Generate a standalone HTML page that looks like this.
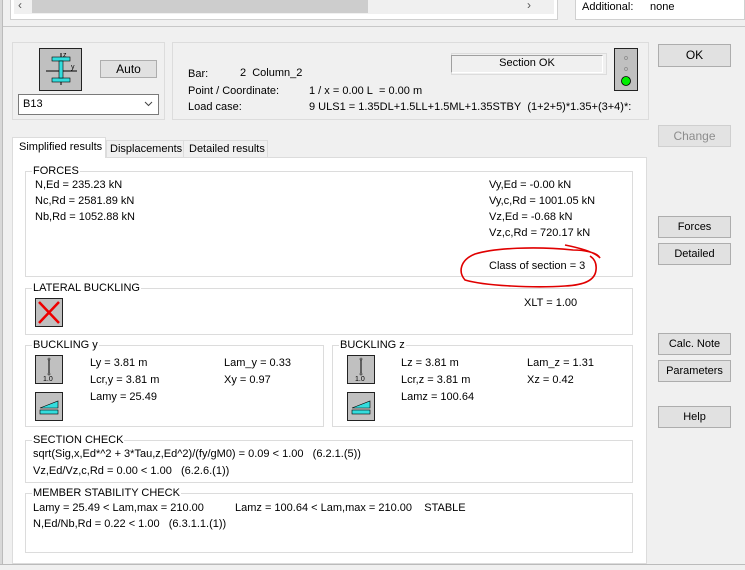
<!DOCTYPE html>
<html><head><meta charset="utf-8"><style>
*{margin:0;padding:0;box-sizing:border-box}
body{width:745px;height:570px;background:#f0f0f0;font-family:"Liberation Sans",sans-serif;font-size:11px;color:#000;position:relative;overflow:hidden}
.a{position:absolute;white-space:nowrap}
.grp{position:absolute;border:1px solid #dcdcdc}
.lbl{position:absolute;top:-7px;left:6px;background:#fff;padding:0 1px;line-height:13px}
.btn{position:absolute;background:#e1e1e1;border:1px solid #adadad;text-align:center;line-height:20px}
.ib{position:absolute;width:28px;height:29px;background:#c0c0c0;border:1px solid #222}
</style></head><body>
<!-- top strip -->
<div class="a" style="left:0;top:0;width:745px;height:27px;background:#f0f0f0;border-bottom:1px solid #c8c8c8"></div>
<div class="a" style="left:10px;top:0;width:548px;height:20px;background:#fff;border:1px solid #d0d0d0;border-top:none"></div>
<div class="a" style="left:14px;top:0;width:540px;height:14px;background:#f0f0f0"></div>
<div class="a" style="left:32px;top:0;width:336px;height:13px;background:#cdcdcd"></div>
<div class="a" style="left:18px;top:-2px;color:#555;font-size:12px">&lsaquo;</div>
<div class="a" style="left:527px;top:-2px;color:#555;font-size:12px">&rsaquo;</div>
<div class="a" style="left:575px;top:0;width:170px;height:20px;background:#fff;border:1px solid #d0d0d0;border-top:none"></div>
<div class="a" style="left:582px;top:1px">Additional:</div>
<div class="a" style="left:650px;top:1px">none</div>
<div class="a" style="left:0;top:0;width:3px;height:570px;background:#d8d8d8;border-right:1px solid #bbb"></div>

<!-- top left group -->
<div class="a" style="left:12px;top:42px;width:153px;height:78px;border:1px solid #dcdcdc"></div>
<div class="a" style="left:39px;top:48px;width:43px;height:43px;background:#c0c0c0;border:1px solid #222">
<svg width="41" height="41" viewBox="0 0 41 41"><line x1="6" y1="22" x2="37" y2="22" stroke="#000"/><line x1="21" y1="4" x2="21" y2="36" stroke="#000"/>
<rect x="12" y="8" width="18" height="4" fill="#3dd" stroke="#000" stroke-width=".6"/><rect x="12" y="29" width="18" height="4" fill="#3dd" stroke="#000" stroke-width=".6"/><rect x="19" y="12" width="4" height="17" fill="#3dd" stroke="#000" stroke-width=".6"/>
<text x="23" y="8" font-size="7" font-family="Liberation Sans">z</text><text x="31" y="20" font-size="7" font-family="Liberation Sans">y</text></svg></div>
<div class="btn" style="left:100px;top:60px;width:57px;height:18px;line-height:16px;font-size:12px">Auto</div>
<div class="a" style="left:18px;top:94px;width:141px;height:21px;background:#fff;border:1px solid #7a7a7a;padding:3px 4px">B13</div>
<svg class="a" style="left:144px;top:101px" width="9" height="6"><polyline points="1,1 4.5,4.5 8,1" fill="none" stroke="#444"/></svg>

<!-- info panel -->
<div class="a" style="left:172px;top:42px;width:477px;height:78px;border:1px solid #dcdcdc"></div>
<div class="a" style="left:188px;top:68px">Bar:</div>
<div class="a" style="left:240px;top:67px">2&nbsp; Column_2</div>
<div class="a" style="left:188px;top:85px">Point / Coordinate:</div>
<div class="a" style="left:309px;top:85px">1 / x = 0.00 L&nbsp; = 0.00 m</div>
<div class="a" style="left:188px;top:101px">Load case:</div>
<div class="a" style="left:309px;top:101px">9 ULS1 = 1.35DL+1.5LL+1.5ML+1.35STBY&nbsp; (1+2+5)*1.35+(3+4)*:</div>
<div class="a" style="left:451px;top:53px;width:156px;height:22px;border:1px solid #dcdcdc"></div>
<div class="a" style="left:451px;top:55px;width:152px;height:18px;border:1px solid #a0a0a0;border-right-color:#fff;border-bottom-color:#fff;text-align:center;line-height:15px">Section OK</div>
<div class="a" style="left:614px;top:48px;width:24px;height:43px;background:#c0c0c0;border:1px solid #222">
<svg width="22" height="41"><circle cx="11" cy="9" r="1.5" fill="none" stroke="#888" stroke-width=".7"/><circle cx="11" cy="20" r="1.5" fill="none" stroke="#888" stroke-width=".7"/><circle cx="11" cy="32" r="4.5" fill="#0e0" stroke="#000" stroke-width=".8"/></svg></div>

<!-- right buttons -->
<div class="btn" style="left:658px;top:44px;width:73px;height:23px;font-size:12px">OK</div>
<div class="btn" style="left:658px;top:125px;width:73px;height:22px;color:#8d8d8d;border-color:#cfcfcf;background:#e3e3e3;font-size:12px">Change</div>
<div class="btn" style="left:658px;top:216px;width:73px;height:22px">Forces</div>
<div class="btn" style="left:658px;top:243px;width:73px;height:22px">Detailed</div>
<div class="btn" style="left:658px;top:333px;width:73px;height:22px">Calc. Note</div>
<div class="btn" style="left:658px;top:360px;width:73px;height:22px">Parameters</div>
<div class="btn" style="left:658px;top:406px;width:73px;height:22px">Help</div>

<!-- tabs -->
<div class="a" style="left:12px;top:157px;width:635px;height:407px;background:#fff;border:1px solid #dcdcdc"></div>
<div class="a" style="left:106px;top:140px;width:78px;height:18px;border:1px solid #dcdcdc;background:#f0f0f0;padding:2px 3px">Displacements</div>
<div class="a" style="left:183px;top:140px;width:85px;height:18px;border:1px solid #dcdcdc;background:#f0f0f0;padding:2px 5px">Detailed results</div>
<div class="a" style="left:12px;top:137px;width:94px;height:21px;border:1px solid #dcdcdc;border-bottom:none;background:#fff;padding:3px 6px">Simplified results</div>
<div class="a" style="left:0;top:564px;width:745px;height:6px;background:#f0f0f0;border-top:1px solid #bbb"></div>

<!-- FORCES -->
<div class="grp" style="left:25px;top:171px;width:608px;height:106px"><div class="lbl">FORCES</div></div>
<div class="a" style="left:35px;top:179px">N,Ed = 235.23 kN</div>
<div class="a" style="left:35px;top:195px">Nc,Rd = 2581.89 kN</div>
<div class="a" style="left:35px;top:211px">Nb,Rd = 1052.88 kN</div>
<div class="a" style="left:489px;top:179px">Vy,Ed = -0.00 kN</div>
<div class="a" style="left:489px;top:195px">Vy,c,Rd = 1001.05 kN</div>
<div class="a" style="left:489px;top:211px">Vz,Ed = -0.68 kN</div>
<div class="a" style="left:489px;top:227px">Vz,c,Rd = 720.17 kN</div>
<div class="a" style="left:489px;top:260px">Class of section = 3</div>
<svg class="a" style="left:455px;top:240px" width="150" height="50"><path d="M110 5 C125 8 140 12 145 18 C142 12 128 10 118 10 C80 6 40 8 20 14 C5 20 3 32 10 40 C30 46 80 48 110 46 C130 45 140 40 141 30 C142 22 138 18 135 16" fill="none" stroke="#e00000" stroke-width="1.6"/></svg>

<!-- LATERAL -->
<div class="grp" style="left:25px;top:288px;width:608px;height:47px"><div class="lbl">LATERAL BUCKLING</div></div>
<div class="ib" style="left:35px;top:298px"><svg width="26" height="27"><path d="M3 3L23 24M23 3L3 24" stroke="#e00" stroke-width="2.5"/></svg></div>
<div class="a" style="left:524px;top:297px">XLT = 1.00</div>

<!-- BUCKLING y -->
<div class="grp" style="left:25px;top:345px;width:299px;height:82px"><div class="lbl">BUCKLING y</div></div>
<div class="ib" style="left:35px;top:355px"><svg width="26" height="27"><line x1="13" y1="3" x2="13" y2="18" stroke="#000"/><circle cx="13" cy="3" r="1" fill="#fff" stroke="#000" stroke-width=".6"/><circle cx="13" cy="18" r="1" fill="#fff" stroke="#000" stroke-width=".6"/><text x="7" y="25" font-size="7" font-family="Liberation Sans">1.0</text></svg></div>
<div class="ib" style="left:35px;top:392px"><svg width="26" height="27"><polygon points="4,15 22,8 22,15" fill="#3dd" stroke="#000" stroke-width=".6"/><rect x="4" y="17" width="18" height="4" fill="#3dd" stroke="#000" stroke-width=".6"/></svg></div>
<div class="a" style="left:90px;top:357px">Ly = 3.81 m</div>
<div class="a" style="left:90px;top:374px">Lcr,y = 3.81 m</div>
<div class="a" style="left:90px;top:391px">Lamy = 25.49</div>
<div class="a" style="left:224px;top:357px">Lam_y = 0.33</div>
<div class="a" style="left:224px;top:374px">Xy = 0.97</div>

<!-- BUCKLING z -->
<div class="grp" style="left:332px;top:345px;width:301px;height:82px"><div class="lbl">BUCKLING z</div></div>
<div class="ib" style="left:347px;top:355px"><svg width="26" height="27"><line x1="13" y1="3" x2="13" y2="18" stroke="#000"/><circle cx="13" cy="3" r="1" fill="#fff" stroke="#000" stroke-width=".6"/><circle cx="13" cy="18" r="1" fill="#fff" stroke="#000" stroke-width=".6"/><text x="7" y="25" font-size="7" font-family="Liberation Sans">1.0</text></svg></div>
<div class="ib" style="left:347px;top:392px"><svg width="26" height="27"><polygon points="4,15 22,8 22,15" fill="#3dd" stroke="#000" stroke-width=".6"/><rect x="4" y="17" width="18" height="4" fill="#3dd" stroke="#000" stroke-width=".6"/></svg></div>
<div class="a" style="left:401px;top:357px">Lz = 3.81 m</div>
<div class="a" style="left:401px;top:374px">Lcr,z = 3.81 m</div>
<div class="a" style="left:401px;top:391px">Lamz = 100.64</div>
<div class="a" style="left:527px;top:357px">Lam_z = 1.31</div>
<div class="a" style="left:527px;top:374px">Xz = 0.42</div>

<!-- SECTION CHECK -->
<div class="grp" style="left:25px;top:440px;width:608px;height:43px"><div class="lbl">SECTION CHECK</div></div>
<div class="a" style="left:33px;top:448px">sqrt(Sig,x,Ed*^2 + 3*Tau,z,Ed^2)/(fy/gM0) = 0.09 &lt; 1.00&nbsp;&nbsp; (6.2.1.(5))</div>
<div class="a" style="left:33px;top:465px">Vz,Ed/Vz,c,Rd = 0.00 &lt; 1.00&nbsp;&nbsp; (6.2.6.(1))</div>

<!-- MEMBER STABILITY -->
<div class="grp" style="left:25px;top:493px;width:608px;height:60px"><div class="lbl">MEMBER STABILITY CHECK</div></div>
<div class="a" style="left:33px;top:502px">Lamy = 25.49 &lt; Lam,max = 210.00</div>
<div class="a" style="left:235px;top:502px">Lamz = 100.64 &lt; Lam,max = 210.00&nbsp;&nbsp;&nbsp; STABLE</div>
<div class="a" style="left:33px;top:518px">N,Ed/Nb,Rd = 0.22 &lt; 1.00&nbsp;&nbsp; (6.3.1.1.(1))</div>
</body></html>
